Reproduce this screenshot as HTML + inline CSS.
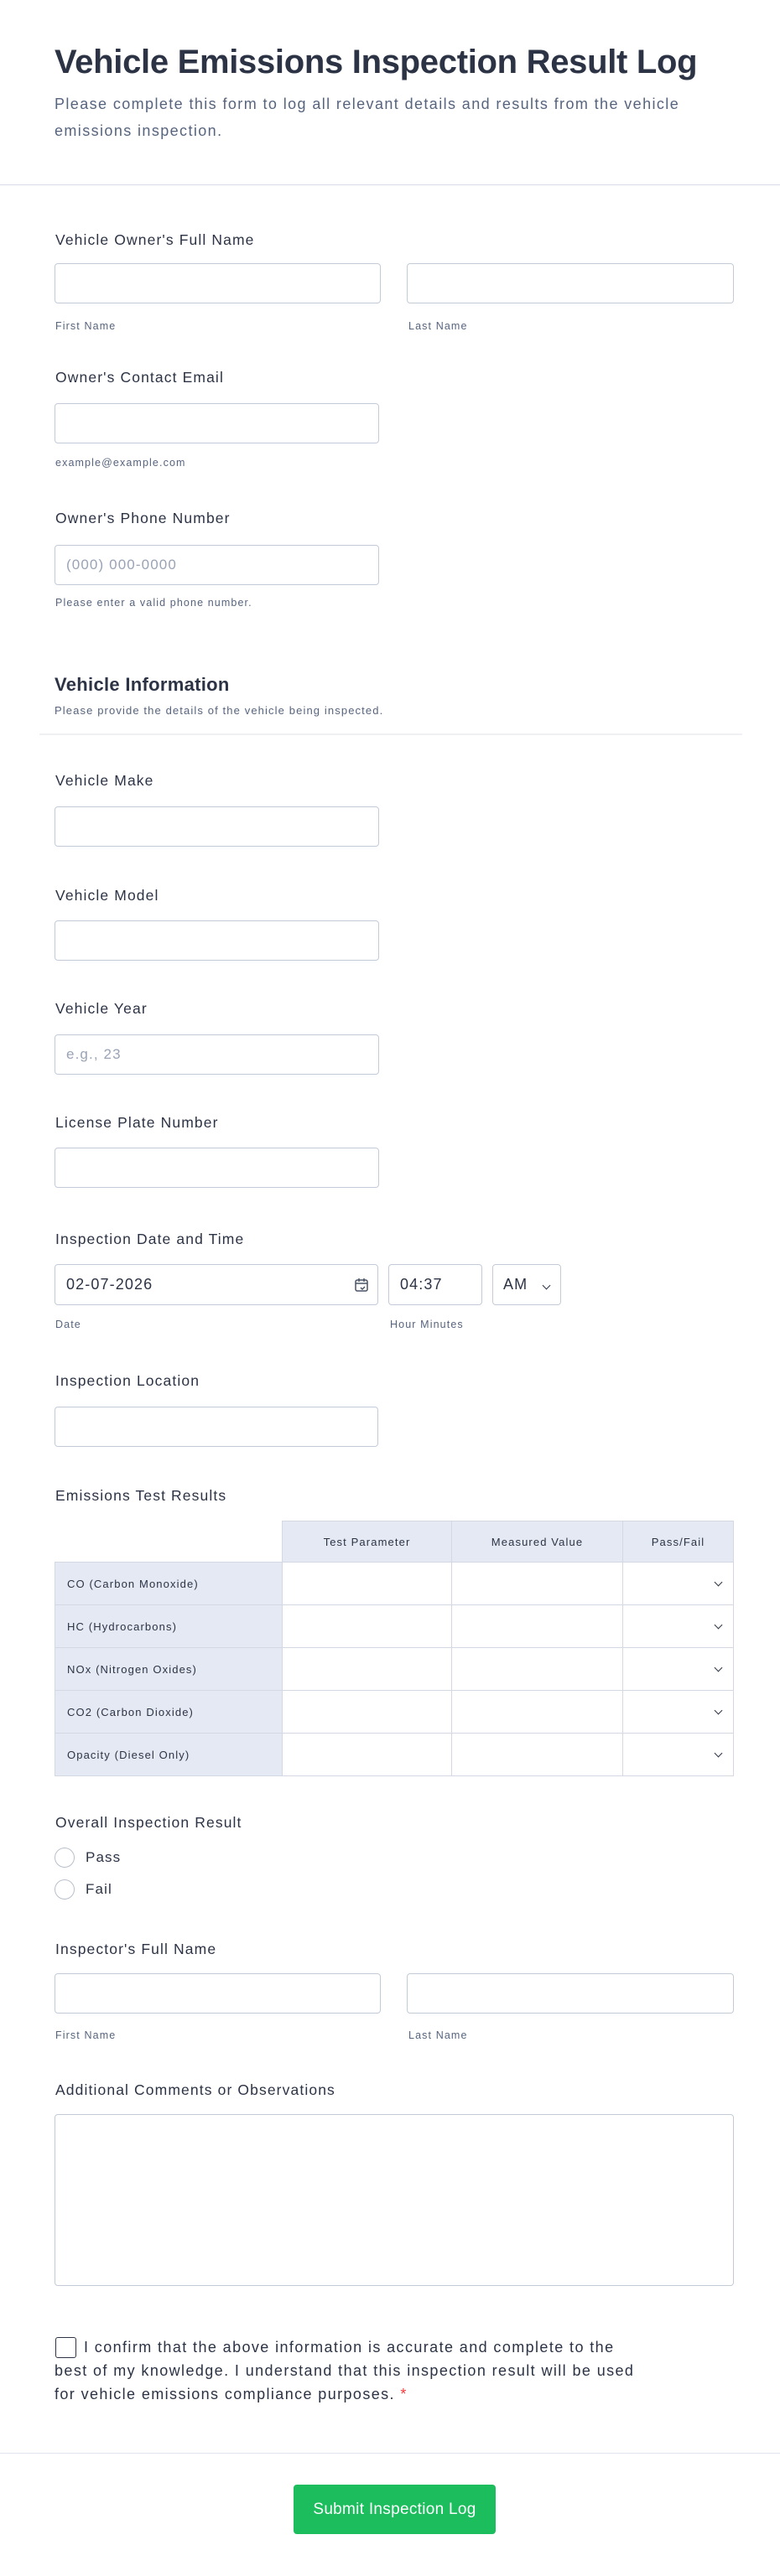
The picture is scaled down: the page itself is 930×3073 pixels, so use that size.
<!DOCTYPE html>
<html><head><meta charset="utf-8"><style>
*{box-sizing:border-box;margin:0;padding:0}
body{width:930px;height:3073px;position:relative;background:#fff;font-family:"Liberation Sans",sans-serif;color:#2c3345;overflow:hidden;letter-spacing:0.07em}
.a{position:absolute}
.lbl{position:absolute;left:66px;font-size:17.5px;color:#2c3345;line-height:20px}
.sub{position:absolute;font-size:12.5px;color:#57647e;line-height:15px}
.in{position:absolute;height:48px;border:1px solid #c3cad8;border-radius:4px;background:#fff}
.ph{position:absolute;left:13px;top:13px;font-size:17px;color:#9aa3b5}
.val{position:absolute;left:13px;top:13px;font-size:18px;color:#2c3345}
.hl{position:absolute;left:0;width:930px;height:1px;background:#e0e4ec}
table{position:absolute;left:65px;top:1814px;border-collapse:collapse;font-size:13px;color:#2c3345}
td,th{border:1px solid #d3d8e3;font-weight:normal}
th{background:#e5e9f4;height:49px;text-align:center}
td{height:51px}
td.r{background:#e5e9f4;padding-left:14px}
.chev{float:right;margin-right:14px;width:7px;height:7px;border-right:1.5px solid #2c3345;border-bottom:1.5px solid #2c3345;transform:rotate(45deg);margin-top:-4px}
.rad{position:absolute;left:65px;width:24px;height:24px;border:1.5px solid #b8bfcc;border-radius:50%}
</style></head><body>
<div class="a" style="left:65px;top:52px;font-size:40px;font-weight:bold;color:#2c3345;letter-spacing:-0.3px">Vehicle Emissions Inspection Result Log</div>
<div class="a" style="left:65px;top:108px;width:850px;font-size:18px;line-height:32px;color:#57647e;white-space:nowrap;letter-spacing:1.4px">Please complete this form to log all relevant details and results from the vehicle<br>emissions inspection.</div>
<div class="hl" style="top:220px;background:#d8dce6"></div>

<div class="lbl" style="top:276px">Vehicle Owner's Full Name</div>
<div class="in" style="left:65px;top:314px;width:389px"></div>
<div class="in" style="left:485px;top:314px;width:390px"></div>
<div class="sub" style="left:66px;top:382px">First Name</div>
<div class="sub" style="left:487px;top:382px">Last Name</div>

<div class="lbl" style="top:440px">Owner's Contact Email</div>
<div class="in" style="left:65px;top:481px;width:387px"></div>
<div class="sub" style="left:66px;top:545px">example@example.com</div>

<div class="lbl" style="top:608px">Owner's Phone Number</div>
<div class="in" style="left:65px;top:650px;width:387px"><span class="ph">(000) 000-0000</span></div>
<div class="sub" style="left:66px;top:712px">Please enter a valid phone number.</div>

<div class="a" style="left:65px;top:804px;font-size:22px;font-weight:bold;letter-spacing:0.3px">Vehicle Information</div>
<div class="sub" style="left:65px;top:840px;font-size:13px">Please provide the details of the vehicle being inspected.</div>
<div class="a" style="left:47px;top:875px;width:838px;height:2px;background:#eef0f4"></div>

<div class="lbl" style="top:921px">Vehicle Make</div>
<div class="in" style="left:65px;top:962px;width:387px"></div>
<div class="lbl" style="top:1058px">Vehicle Model</div>
<div class="in" style="left:65px;top:1098px;width:387px"></div>
<div class="lbl" style="top:1193px">Vehicle Year</div>
<div class="in" style="left:65px;top:1234px;width:387px"><span class="ph">e.g., 23</span></div>
<div class="lbl" style="top:1329px">License Plate Number</div>
<div class="in" style="left:65px;top:1369px;width:387px"></div>

<div class="lbl" style="top:1468px">Inspection Date and Time</div>
<div class="in" style="left:65px;top:1508px;width:386px;height:49px"><span class="val">02-07-2026</span>
<svg class="a" style="left:356px;top:15px" width="18" height="18" viewBox="0 0 18 18" fill="none" stroke="#4a5366" stroke-width="1.5"><rect x="2" y="3" width="14" height="13" rx="2"/><path d="M2 7h14M6 1v4M12 1v4M8 12l2 2 3-3"/></svg></div>
<div class="in" style="left:463px;top:1508px;width:112px;height:49px"><span class="val">04:37</span></div>
<div class="in" style="left:587px;top:1508px;width:82px;height:49px"><span class="val" style="left:12px">AM</span><span class="chev a" style="left:60px;top:21px;margin:0"></span></div>
<div class="sub" style="left:66px;top:1573px">Date</div>
<div class="sub" style="left:465px;top:1573px">Hour Minutes</div>

<div class="lbl" style="top:1637px">Inspection Location</div>
<div class="in" style="left:65px;top:1678px;width:386px;height:48px"></div>

<div class="lbl" style="top:1774px">Emissions Test Results</div>
<table>
<tr><th style="width:271px;background:#fff;border:none;border-bottom:1px solid #d3d8e3"></th><th style="width:202px">Test Parameter</th><th style="width:204px">Measured Value</th><th style="width:132px">Pass/Fail</th></tr>
<tr><td class="r">CO (Carbon Monoxide)</td><td></td><td></td><td><span class="chev"></span></td></tr>
<tr><td class="r">HC (Hydrocarbons)</td><td></td><td></td><td><span class="chev"></span></td></tr>
<tr><td class="r">NOx (Nitrogen Oxides)</td><td></td><td></td><td><span class="chev"></span></td></tr>
<tr><td class="r">CO2 (Carbon Dioxide)</td><td></td><td></td><td><span class="chev"></span></td></tr>
<tr><td class="r">Opacity (Diesel Only)</td><td></td><td></td><td><span class="chev"></span></td></tr>
</table>

<div class="lbl" style="top:2164px">Overall Inspection Result</div>
<div class="rad" style="top:2204px"></div><div class="a" style="left:102px;top:2206px;font-size:17px">Pass</div>
<div class="rad" style="top:2242px"></div><div class="a" style="left:102px;top:2244px;font-size:17px">Fail</div>

<div class="lbl" style="top:2315px">Inspector's Full Name</div>
<div class="in" style="left:65px;top:2354px;width:389px"></div>
<div class="in" style="left:485px;top:2354px;width:390px"></div>
<div class="sub" style="left:66px;top:2421px">First Name</div>
<div class="sub" style="left:487px;top:2421px">Last Name</div>

<div class="lbl" style="top:2483px">Additional Comments or Observations</div>
<div class="in" style="left:65px;top:2522px;width:810px;height:205px"></div>

<div class="a" style="left:66px;top:2788px;width:25px;height:25px;border:1.5px solid #2c3345;border-radius:3px"></div>
<div class="a" style="left:65px;top:2786px;width:800px;font-size:18px;line-height:28px;color:#2c3345;white-space:nowrap;letter-spacing:1.4px"><span style="padding-left:35px"></span>I confirm that the above information is accurate and complete to the<br>best of my knowledge. I understand that this inspection result will be used<br>for vehicle emissions compliance purposes. <span style="color:#f23a3c">*</span></div>

<div class="hl" style="top:2926px"></div>
<div class="a" style="left:350px;top:2964px;width:241px;height:59px;background:#1bbd5c;border-radius:4px;color:#fff;font-size:19px;text-align:center;line-height:59px;letter-spacing:0.3px">Submit Inspection Log</div>
</body></html>
